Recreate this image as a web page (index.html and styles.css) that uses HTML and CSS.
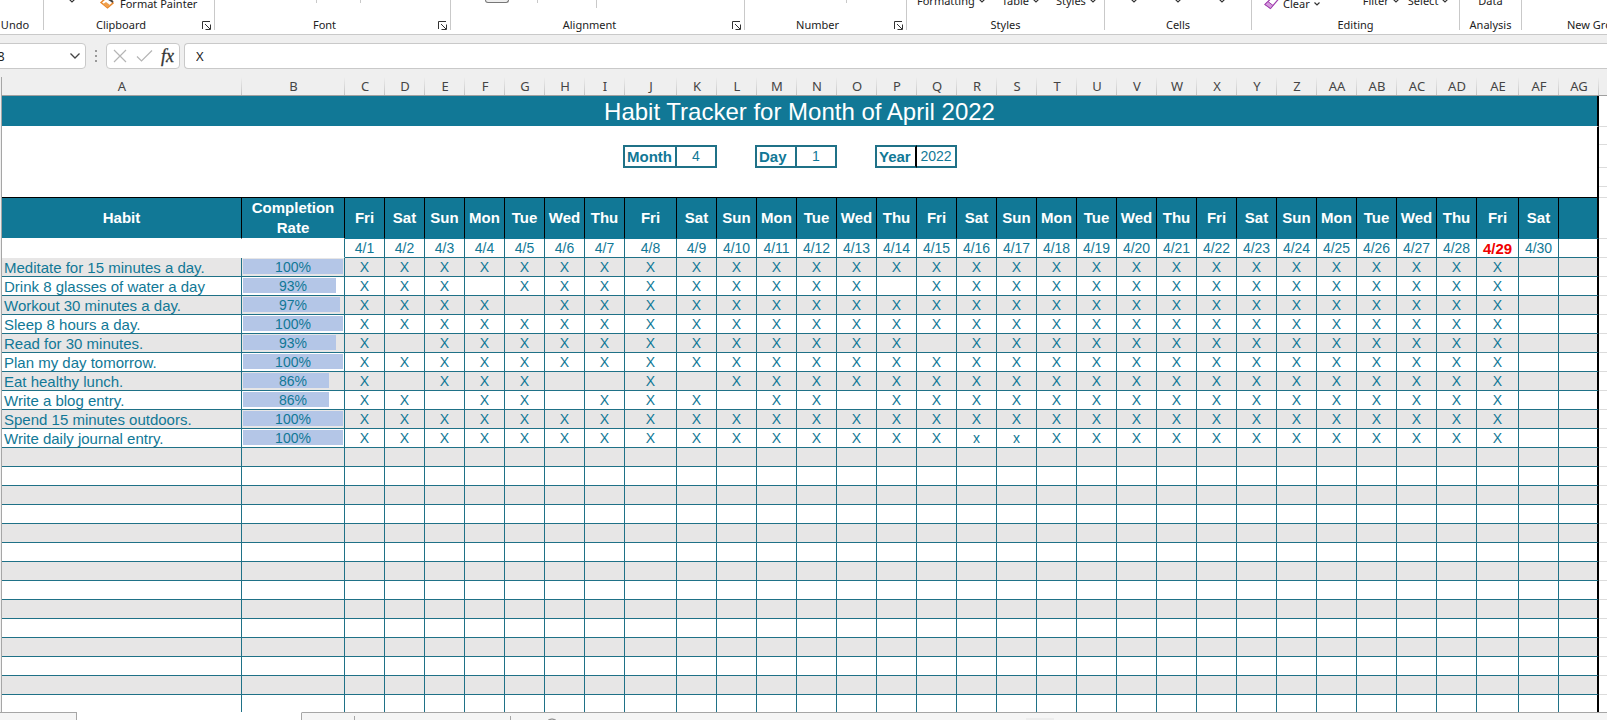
FILE: index.html
```html
<!DOCTYPE html>
<html lang="en">
<head>
<meta charset="utf-8">
<title>Habit Tracker</title>
<link rel="stylesheet" href="styles.css">
</head>
<body>
<svg class="defs" aria-hidden="true">
  <symbol id="chevron" viewBox="0 0 8 6"><path d="M1.5 1.5 4 4 6.5 1.5" fill="none" stroke="#333" stroke-width="1.2"/></symbol>
  <symbol id="launcher" viewBox="0 0 9 9"><path d="M.5 8V.5H8M3 3l5 5M8.500 3.500v5h-5" fill="none" stroke="#333"/></symbol>
</svg>

<header class="ribbon">
  <section class="group group-undo"><div class="foot"><span>Undo</span></div></section>
  <section class="group group-clipboard">
    <div class="tools">
      <button class="cmd more" aria-label="Paste options"><svg class="chevron"><use href="#chevron"/></svg></button>
      <button class="cmd painter">
        <svg width="15" height="12" viewBox="0 0 15 12"><path d="M1 4.500 7.500 9.800 13 5 10 0H6z" fill="#fff" stroke="#e8862a" stroke-width="1.500"/><path d="M3 6l4 3.500 3-2.500-4-3z" fill="#f0a04c"/><path d="M7 0l6 4" stroke="#444" stroke-width="2"/></svg>
        Format Painter
      </button>
    </div>
    <div class="foot"><span>Clipboard</span><button class="launch" aria-label="Clipboard settings"><svg><use href="#launcher"/></svg></button></div>
  </section>
  <section class="group group-font">
    <div class="tools rules"><i class="rule"></i><i class="rule"></i></div>
    <div class="foot"><span>Font</span><button class="launch" aria-label="Font settings"><svg><use href="#launcher"/></svg></button></div>
  </section>
  <section class="group group-align">
    <div class="tools rules"><button class="pressed" aria-label="Align center"></button><i class="rule"></i><i class="rule rule-long"></i></div>
    <div class="foot"><span>Alignment</span><button class="launch" aria-label="Alignment settings"><svg><use href="#launcher"/></svg></button></div>
  </section>
  <section class="group group-number">
    <div class="tools rules"><i class="rule"></i></div>
    <div class="foot"><span>Number</span><button class="launch" aria-label="Number format settings"><svg><use href="#launcher"/></svg></button></div>
  </section>
  <section class="group group-styles">
    <div class="tools">
      <button class="cmd">Formatting<svg class="chevron"><use href="#chevron"/></svg></button>
      <button class="cmd">Table<svg class="chevron"><use href="#chevron"/></svg></button>
      <button class="cmd">Styles<svg class="chevron"><use href="#chevron"/></svg></button>
    </div>
    <div class="foot"><span>Styles</span></div>
  </section>
  <section class="group group-cells">
    <div class="tools">
      <button class="cmd" aria-label="Insert"><svg class="chevron"><use href="#chevron"/></svg></button>
      <button class="cmd" aria-label="Delete"><svg class="chevron"><use href="#chevron"/></svg></button>
      <button class="cmd" aria-label="Format"><svg class="chevron"><use href="#chevron"/></svg></button>
    </div>
    <div class="foot"><span>Cells</span></div>
  </section>
  <section class="group group-editing">
    <div class="tools">
      <button class="cmd clear">
        <svg width="16" height="12" viewBox="0 0 16 12"><path d="M1 6.500 7 .5h8L6.500 10.500z" fill="#fff" stroke="#a03fae" stroke-width="1.200"/><path d="M1 6.500 4 3.500 9 7.500 6.500 10.500z" fill="#d59add" stroke="#a03fae"/></svg>
        Clear<svg class="chevron"><use href="#chevron"/></svg>
      </button>
      <button class="cmd raised">Filter<svg class="chevron"><use href="#chevron"/></svg></button>
      <button class="cmd raised">Select<svg class="chevron"><use href="#chevron"/></svg></button>
    </div>
    <div class="foot"><span>Editing</span></div>
  </section>
  <section class="group group-analysis">
    <div class="tools"><button class="cmd">Data</button></div>
    <div class="foot"><span>Analysis</span></div>
  </section>
  <section class="group group-new"><div class="foot"><span>New Group</span></div></section>
</header>

<div class="formula-bar">
  <div class="field name-box">
    <input aria-label="Name box" value="C8">
    <button aria-label="Show names"><svg width="12" height="8" viewBox="0 0 12 8"><path d="M1.500 1.500 6 6l4.500-4.500" fill="none" stroke="#444" stroke-width="1.300"/></svg></button>
  </div>
  <svg class="grip" width="4" height="12" viewBox="0 0 4 12" fill="#999"><path d="M1 0h2v2H1zM1 5h2v2H1zM1 10h2v2H1z"/></svg>
  <div class="field entry-buttons">
    <button aria-label="Cancel"><svg width="14" height="14" viewBox="0 0 14 14"><path d="M1 1l12 12M13 1 1 13" stroke="#b5b5b5" stroke-width="1.200"/></svg></button>
    <button aria-label="Enter"><svg width="17" height="14" viewBox="0 0 17 14"><path d="M1 7.500 5.500 12 16 1.500" fill="none" stroke="#b5b5b5" stroke-width="1.200"/></svg></button>
    <button class="fx" aria-label="Insert function">fx</button>
  </div>
  <div class="field formula"><input aria-label="Formula bar" value="X"></div>
</div>

<main class="sheet">
  <table class="grid">
    <colgroup id="cols"></colgroup>
    <thead><tr class="letters" id="letters"></tr></thead>
    <tbody id="body">
      <tr class="title"><th colspan="33">Habit Tracker for Month of April 2022</th><td></td></tr>
      <tr class="gap gap-top"><td colspan="33"></td><td></td></tr>
      <tr class="setup">
        <td colspan="8"></td><td class="edge"></td>
        <th class="box">Month</th><td class="box">4</td>
        <td class="edge"></td><th class="box">Day</th><td class="box">1</td>
        <td class="edge"></td><th class="box dark">Year</th><td class="box">2022</td>
        <td colspan="16"></td><td></td>
      </tr>
      <tr class="gap"><td colspan="33"></td><td></td></tr>
      <tr class="gap gap-low"><td colspan="33"></td><td></td></tr>
    </tbody>
  </table>
</main>

<footer class="tabs">
  <button class="tab tab-first" aria-label="Previous sheet"></button>
  <button class="tab tab-active" aria-label="Habit sheet"></button>
  <button class="tab tab-a" aria-label="Sheet 2"></button>
  <button class="tab tab-b" aria-label="Sheet 3"></button>
  <div class="tab-rest"><svg width="16" height="16" viewBox="0 0 16 16"><circle cx="8" cy="8" r="7" fill="none" stroke="#777"/></svg><i class="thumb"></i></div>
</footer>
<script src="sheet.js"></script>
</body>
</html>
```
FILE: styles.css
```css
:root {
  --teal: #117896;
  --rule: #1f7187;
  --band: #e7e6e6;
  --line: #c9c9c9;
  --ui: "Noto Sans", "Open Sans", sans-serif;
}

* { box-sizing: border-box; }

body {
  margin: 0;
  height: 100vh;
  display: flex;
  flex-direction: column;
  overflow: hidden;
  background: #efefef;
  color: #222;
  font-family: var(--ui);
  font-size: 11px;
}

button, input {
  border: 0;
  padding: 0;
  background: none;
  color: inherit;
  font: inherit;
}

.defs { display: none; }

/* Ribbon */
.ribbon {
  display: flex;
  flex: none;
  height: 35px;
  background: #fff;
  border-bottom: 1px solid var(--line);
  overflow: hidden;
}
.group {
  flex: none;
  display: flex;
  flex-direction: column;
  justify-content: space-between;
  height: 30px;
  border-right: 1px solid var(--line);
}
.tools {
  display: flex;
  align-items: flex-end;
  height: 9px;
}
.cmd {
  display: flex;
  align-items: center;
  flex: none;
  gap: 3px;
  line-height: 16px;
  white-space: nowrap;
}
.chevron { width: 8px; height: 6px; flex: none; }
.foot {
  display: flex;
  justify-content: center;
  align-items: center;
  margin-top: auto;
  margin-bottom: -3px;
  line-height: 16px;
}
.foot span { flex: 1; text-align: center; }
.launch { width: 16px; height: 16px; padding: 4px 3px 3px 4px; }
.launch svg { display: block; width: 9px; height: 9px; }
.rules { align-items: flex-start; }
.rule { width: 1px; height: 3px; background: var(--line); }
.rule-long { height: 8px; }
.pressed {
  width: 24px;
  height: 3px;
  border: 1px solid #777;
  border-top: 0;
  border-radius: 0 0 4px 4px;
  background: #eee;
}

.group-undo { width: 44px; padding-right: 13px; }
.group-clipboard { width: 171px; }
.group-clipboard .tools { height: 12px; padding-left: 24px; }
.more { height: 22px; }
.painter { margin-left: 24px; gap: 5px; }
.group-font { width: 236px; }
.group-font .tools { padding-left: 101px; gap: 43px; }
.group-align { width: 294px; }
.group-align .tools { padding-left: 34px; }
.group-align .rule { margin-left: 28px; }
.group-align .rule-long { margin-left: 58px; }
.group-number { width: 162px; }
.group-number .tools { padding-left: 101px; }
.group-styles { width: 198px; }
.group-styles .tools { padding-left: 10px; gap: 16px; }
.group-cells { width: 147px; }
.group-cells .tools { height: 4px; gap: 36px; padding-left: 25px; }
.group-editing { width: 208px; }
.group-editing .tools { height: 12px; padding-left: 12px; }
.clear { margin-right: 42px; }
.raised { padding-bottom: 3px; margin-right: 8px; }
.group-analysis { width: 62px; }
.group-analysis .tools { justify-content: center; }
.group-new { flex: 1; border: 0; padding-left: 45px; white-space: nowrap; }
.group-new .foot span { text-align: left; }

/* Formula bar */
.formula-bar {
  display: flex;
  flex: none;
  align-items: center;
  padding: 8px 0;
  font-size: 13px;
}
.field {
  display: flex;
  align-items: center;
  height: 26px;
  background: #fff;
  border: 1px solid var(--line);
  border-radius: 4px;
}
.field button { display: flex; }
.name-box { width: 116px; margin-left: -30px; padding: 0 4px 0 18px; }
.name-box input { flex: 1; min-width: 0; }
.grip { margin: 0 8px; }
.entry-buttons { width: 74px; justify-content: space-between; padding: 0 5px 0 6px; margin-right: 4px; }
.fx { font: italic 18px/20px "Liberation Serif", serif; color: #333; -webkit-text-stroke: 0.3px #333; }
.formula { flex: 1; border-right: 0; border-radius: 4px 0 0 4px; padding-left: 11px; }
.formula input { width: 100%; }

/* Sheet */
.sheet {
  flex: 1;
  min-height: 0;
  overflow: hidden;
  margin-left: 1px;
  border-left: 1px solid #a6a6a6;
}
.grid {
  width: 100%;
  table-layout: fixed;
  border-collapse: separate;
  border-spacing: 0;
  color: var(--teal);
  font: 14px/17px "Liberation Sans", Arial, sans-serif;
}
.col-habit { width: 240px; }
.col-rate { width: 103px; }
.col-day { width: 40px; }
.col-wide { width: 52px; }
.col-today { width: 42px; }

.grid td, .grid th {
  padding: 0;
  height: 19px;
  text-align: center;
  white-space: nowrap;
  overflow: hidden;
}
.grid td { background: #fff; }
.grid .letters th {
  background: linear-gradient(#efefef, #c4c4c4) no-repeat right / 1px 100%;
  border-bottom: 1px solid #a0a0a0;
  color: #444;
  font: 13px/18px var(--ui);
}
.grid .letters th:last-child { background: none; }

.grid tbody tr > :last-child { border: 0; border-bottom: 1px solid #dcdcdc; background: #fff; }
.grid tbody tr > :nth-last-child(2) { border-right: 2px solid #000; }

.grid .title th {
  height: 31px;
  padding-top: 1px;
  border-bottom: 1px solid #fff;
  background: var(--teal);
  background-clip: padding-box;
  color: #fff;
  font-size: 24px;
  font-weight: 400;
  line-height: 29px;
}
.grid .gap-top td { height: 18px; }
.grid .gap-low td { height: 11px; }
.grid .gap-low td:first-child { border-bottom: 1px solid #000; }

.grid .setup > * { height: 23px; }
.grid .setup .edge { border-right: 2px solid var(--rule); }
.grid .setup .box { border: 2px solid var(--rule); border-left: 0; }
.grid .setup th { background: #fff; font-size: 15px; text-align: left; padding-left: 2px; }
.grid .setup .dark { border-right-color: #000; }

.grid .days th {
  height: 41px;
  border-right: 1px solid #000;
  border-bottom: 1px solid var(--teal);
  background: var(--teal);
  color: #fff;
  font-size: 15px;
  line-height: 20px;
  white-space: normal;
}
.grid .days th:nth-child(-n+2) { border-bottom-color: #fff; }

.grid .row td { border-right: 1px solid var(--rule); border-bottom: 1px solid var(--rule); padding-top: 1px; }
.grid .row td:nth-last-child(2) { border-right: 2px solid #000; }
.grid .dates td:nth-child(-n+2) { border-color: #fff; }
.grid .dates td:nth-child(2) { border-right-color: var(--rule); }
.grid .row .today { color: #f00000; font-size: 15px; font-weight: 700; }
.grid .banded td { background: var(--band); }
.grid .row td:last-child { border-right: 0; border-bottom-color: #dcdcdc; background: #fff; }
.grid .row .habit { padding-left: 2px; text-align: left; font-size: 15px; }
.grid .row .rate-cell { padding: 1px 1px 2px; }
.rate {
  height: 15px;
  line-height: 17px;
  background: linear-gradient(#b4c6e7, #b4c6e7) no-repeat;
  background-size: var(--rate) 100%;
}

/* Sheet tabs */
.tabs { display: flex; flex: none; height: 8px; overflow: hidden; background: #f5f5f5; }
.tab { border-top: 1px solid #a6a6a6; }
.tab-first { width: 77px; border-right: 1px solid #a6a6a6; }
.tab-active { width: 225px; background: #fff; border-top-color: #fff; border-right: 1px solid #a6a6a6; }
.tab-a, .tab-b { background: linear-gradient(#a6a6a6, #a6a6a6) no-repeat right bottom / 1px 4px; }
.tab-a { width: 53px; }
.tab-b { width: 156px; }
.tab-rest { flex: 1; display: flex; padding: 5px 0 0 33px; border-top: 1px solid #a6a6a6; }
.tab-rest svg { flex: none; }
.thumb { width: 28px; height: 8px; margin-left: 466px; background: #ececec; }
```
FILE: sheet.js
```js
const LAST_DAY = 30;
const TODAY = 29;
const WEEK = ["Fri", "Sat", "Sun", "Mon", "Tue", "Wed", "Thu"];
const HABITS = [
  { name: "Meditate for 15 minutes a day.", missed: [] },
  { name: "Drink 8 glasses of water a day", missed: [4, 14] },
  { name: "Workout 30 minutes a day.", missed: [5] },
  { name: "Sleep 8 hours a day.", missed: [] },
  { name: "Read for 30 minutes.", missed: [2, 15] },
  { name: "Plan my day tomorrow.", missed: [] },
  { name: "Eat healthy lunch.", missed: [2, 6, 7, 9] },
  { name: "Write a blog entry.", missed: [3, 6, 10, 13] },
  { name: "Spend 15 minutes outdoors.", missed: [] },
  { name: "Write daily journal entry.", missed: [], lower: [16, 17] }
];
const ROWS = 24;
const days = Array.from({ length: LAST_DAY }, (_, i) => i + 1);
const body = document.getElementById("body");

function letter(i) {
  return i < 26 ? String.fromCharCode(65 + i) : "A" + String.fromCharCode(39 + i);
}

function colClass(i) {
  if (i === 0) return "col-habit";
  if (i === 1) return "col-rate";
  if (i === 9) return "col-wide";
  if (i === 30) return "col-today";
  return i < 33 ? "col-day" : "";
}

function addRow(className, html) {
  const tr = document.createElement("tr");
  tr.className = className;
  tr.innerHTML = html;
  body.append(tr);
}

let cols = "";
let letters = "";
for (let i = 0; i < 34; i++) {
  cols += `<col class="${colClass(i)}">`;
  letters += `<th>${i < 33 ? letter(i) : ""}</th>`;
}
document.getElementById("cols").innerHTML = cols;
document.getElementById("letters").innerHTML = letters;

addRow("days", "<th>Habit</th><th>Completion Rate</th>" +
  days.map(d => `<th>${WEEK[(d - 1) % 7]}</th>`).join("") + "<th></th><td></td>");

addRow("row dates", "<td></td><td></td>" +
  days.map(d => `<td${d === TODAY ? ' class="today"' : ""}>4/${d}</td>`).join("") + "<td></td><td></td>");

for (let r = 0; r < ROWS; r++) {
  const h = HABITS[r];
  let html = "<td></td><td></td>";
  if (h) {
    const rate = Math.round((TODAY - h.missed.length) / TODAY * 100);
    html = `<td class="habit">${h.name}</td><td class="rate-cell"><div class="rate" style="--rate:${rate}%">${rate}%</div></td>`;
  }
  for (const d of days) {
    const done = h && d <= TODAY && !h.missed.includes(d);
    html += `<td>${done ? (h.lower && h.lower.includes(d) ? "x" : "X") : ""}</td>`;
  }
  addRow(r % 2 ? "row" : "row banded", html + "<td></td><td></td>");
}
```
